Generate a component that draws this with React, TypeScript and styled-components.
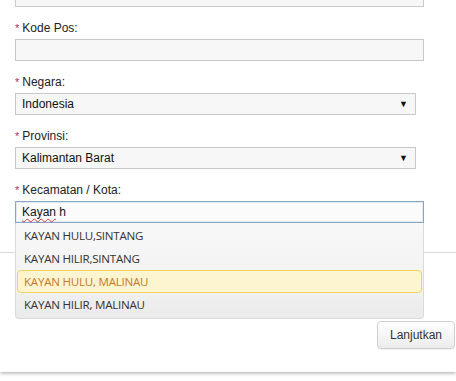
import { createGlobalStyle, styled } from 'styled-components';

const GlobalStyle = createGlobalStyle`
  html, body {
    margin: 0;
    padding: 0;
    background: #ffffff;
  }
  body {
    font-family: 'Liberation Sans', Arial, sans-serif;
    font-size: 12px;
    color: #222;
    overflow: hidden;
  }
`;

const Page = styled.div`
  width: 456px;
  height: 381px;
  overflow: hidden;
`;

const Card = styled.div`
  background: #fff;
  height: 372px;
  box-shadow: 0 1px 4px rgba(0, 0, 0, 0.35);
  display: flex;
  flex-direction: column;
`;

const Form = styled.div`
  padding: 0 32px 0 15px;
  margin-top: -15px;
  display: flex;
  flex-direction: column;
`;

const Field = styled.div<{ $first?: boolean }>`
  display: flex;
  flex-direction: column;
  margin-top: ${({ $first }) => ($first ? '0' : '14px')};
  position: relative;
`;

const Label = styled.label`
  display: block;
  line-height: 15px;
  margin-bottom: 3px;
  color: #222;
`;

const Star = styled.span`
  color: #b0305a;
  font-size: 11px;
  margin-right: 3px;
`;

const TextBox = styled.div<{ $focused?: boolean }>`
  box-sizing: border-box;
  width: 409px;
  height: 22px;
  background: ${({ $focused }) => ($focused ? '#fbfbfb' : '#f7f7f7')};
  border: 1px solid ${({ $focused }) => ($focused ? '#8aa4c4' : '#c9c9c9')};
  box-shadow: ${({ $focused }) => ($focused ? 'inset 0 0 0 1px #e2eaf4' : 'none')};
  padding: 0 6px;
  display: flex;
  align-items: center;
  color: #111;
`;

const SelectBox = styled.div`
  box-sizing: border-box;
  width: 401px;
  height: 22px;
  background: #f7f7f7;
  border: 1px solid #c9c9c9;
  padding: 0 7px 0 6px;
  display: flex;
  align-items: center;
  justify-content: space-between;
  color: #111;
`;

const Arrow = styled.span`
  font-size: 9px;
  color: #111;
`;

const Squiggle = styled.span`
  text-decoration-line: underline;
  text-decoration-style: wavy;
  text-decoration-color: #e03a3a;
  text-decoration-thickness: 1px;
  text-underline-offset: 2px;
`;

const Menu = styled.ul`
  position: absolute;
  top: 100%;
  left: 0;
  z-index: 10;
  box-sizing: border-box;
  width: 409px;
  margin: 0;
  padding: 1px 1px 2px;
  list-style: none;
  background: linear-gradient(#f8f8f8, #f2f2f2 60%, #ebebeb);
  border: 1px solid #dadada;
  border-top: none;
  border-radius: 0 0 4px 4px;
  font-family: 'Open Sans', 'Noto Sans', sans-serif;
  font-size: 11.6px;
`;

const Item = styled.li<{ $active?: boolean }>`
  box-sizing: border-box;
  height: 23px;
  line-height: 21px;
  padding: 0 6px;
  border: 1px solid ${({ $active }) => ($active ? '#f4d25c' : 'transparent')};
  border-radius: 4px;
  background: ${({ $active }) => ($active ? '#fdf5cf' : 'transparent')};
  color: ${({ $active }) => ($active ? '#c7772a' : '#333')};
  letter-spacing: -0.25px;
`;

const Divider = styled.div`
  height: 1px;
  background: #dcdcdc;
  margin-top: 29px;
`;

const Footer = styled.div`
  display: flex;
  justify-content: flex-end;
  padding: 68px 1px 0 0;
`;

const Button = styled.button`
  box-sizing: border-box;
  width: 78px;
  height: 28px;
  border: 1px solid #cfcfcf;
  border-radius: 4px;
  background: linear-gradient(#ffffff, #ececec);
  font-family: 'Liberation Sans', Arial, sans-serif;
  font-size: 12px;
  color: #333;
  box-shadow: 0 1px 1px rgba(0, 0, 0, 0.06);
`;

const suggestions = ['KAYAN HULU,SINTANG', 'KAYAN HILIR,SINTANG', 'KAYAN HULU, MALINAU', 'KAYAN HILIR, MALINAU'];

export default function App() {
  return (
    <Page>
      <GlobalStyle />
      <Card>
        <Form>
          <Field $first>
            <TextBox />
          </Field>
          <Field>
            <Label>
              <Star>*</Star>Kode Pos:
            </Label>
            <TextBox />
          </Field>
          <Field>
            <Label>
              <Star>*</Star>Negara:
            </Label>
            <SelectBox>
              Indonesia<Arrow>▼</Arrow>
            </SelectBox>
          </Field>
          <Field>
            <Label>
              <Star>*</Star>Provinsi:
            </Label>
            <SelectBox>
              Kalimantan Barat<Arrow>▼</Arrow>
            </SelectBox>
          </Field>
          <Field>
            <Label>
              <Star>*</Star>Kecamatan / Kota:
            </Label>
            <TextBox $focused>
              <Squiggle>Kayan</Squiggle>&nbsp;h
            </TextBox>
            <Menu>
              {suggestions.map((s, i) => (
                <Item key={s} $active={i === 2}>
                  {s}
                </Item>
              ))}
            </Menu>
          </Field>
        </Form>
        <Divider />
        <Footer>
          <Button>Lanjutkan</Button>
        </Footer>
      </Card>
    </Page>
  );
}
